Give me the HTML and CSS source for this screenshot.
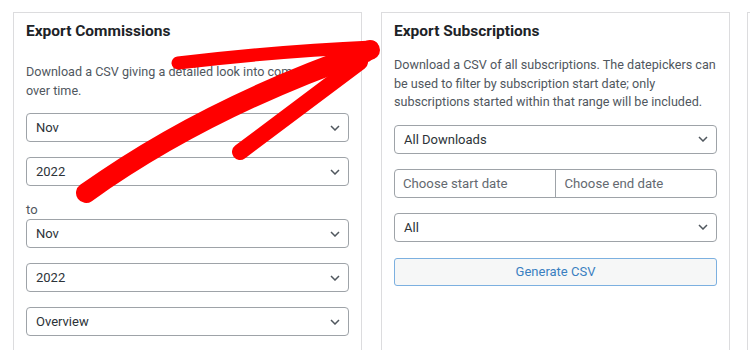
FILE: index.html
```html
<!DOCTYPE html>
<html lang="en">
<head>
    <meta charset="UTF-8">
    <meta name="viewport" content="width=device-width, initial-scale=1.0">
    <title>Export</title>
    <link rel="stylesheet" href="styles.css">
</head>
<body>
    <div class="panels">
        <div class="postbox">
            <h2>Export Commissions</h2>
            <p class="desc desc-wide">Download a CSV giving a detailed look into commissions over time.</p>
            <div class="field">
                <div class="select"><span>Nov</span><svg viewBox="0 0 10 6"><path d="M1 1l4 4 4-4"/></svg></div>
                <div class="select"><span>2022</span><svg viewBox="0 0 10 6"><path d="M1 1l4 4 4-4"/></svg></div>
                <div class="to">to</div>
                <div class="select"><span>Nov</span><svg viewBox="0 0 10 6"><path d="M1 1l4 4 4-4"/></svg></div>
                <div class="select"><span>2022</span><svg viewBox="0 0 10 6"><path d="M1 1l4 4 4-4"/></svg></div>
                <div class="select"><span>Overview</span><svg viewBox="0 0 10 6"><path d="M1 1l4 4 4-4"/></svg></div>
            </div>
        </div>

        <div class="postbox">
            <h2>Export Subscriptions</h2>
            <p class="desc">Download a CSV of all subscriptions. The datepickers can be used to filter by subscription start date; only subscriptions started within that range will be included.</p>
            <div class="field">
                <div class="select"><span>All Downloads</span><svg viewBox="0 0 10 6"><path d="M1 1l4 4 4-4"/></svg></div>
                <div class="dates">
                    <div class="date">Choose start date</div>
                    <div class="date">Choose end date</div>
                </div>
                <div class="select"><span>All</span><svg viewBox="0 0 10 6"><path d="M1 1l4 4 4-4"/></svg></div>
                <button class="btn">Generate CSV</button>
            </div>
        </div>

        <div class="postbox"></div>
    </div>

    <svg class="arrow" viewBox="0 0 750 350">
        <path d="M86 193 Q205 108 366 52"/>
        <path class="thin" d="M178 63 Q280 51 372 47"/>
        <path class="mid" d="M240 152 L360 62"/>
        <circle cx="370" cy="50" r="10"/>
    </svg>
</body>
</html>
```

FILE: styles.css
```css
* {
    margin: 0;
    padding: 0;
    box-sizing: border-box;
}

body {
    font-family: Roboto, "Liberation Sans", sans-serif;
    background: #fff;
    color: #1d2327;
    width: 750px;
    height: 350px;
    overflow: hidden;
    position: relative;
}

.panels {
    display: flex;
    gap: 19px;
    padding: 12px 0 0 13px;
    width: 750px;
    height: 350px;
    overflow: hidden;
}

.postbox {
    width: 349px;
    height: 338px;
    flex-shrink: 0;
    border: 1px solid #dcdcde;
    border-bottom: none;
    padding: 7px 12px 0;
}

.postbox:last-child {
    margin-left: -2px;
}

h2 {
    font-size: 15.5px;
    font-weight: 700;
    line-height: 20px;
    margin-top: 1px;
}

.desc {
    font-size: 12.6px;
    line-height: 18.5px;
    color: #50575e;
    margin-top: 15px;
}

.desc-wide {
    margin-top: 22px;
}

.field {
    display: flex;
    flex-direction: column;
    gap: 15px;
    margin-top: 13px;
}

.select {
    height: 29px;
    border: 1px solid #9ea3a8;
    border-radius: 4px;
    display: flex;
    align-items: center;
    justify-content: space-between;
    padding: 0 8px 0 9px;
    font-size: 13px;
    color: #2c3338;
    background: #fff;
}

.select svg {
    width: 10px;
    height: 6px;
    fill: none;
    stroke: #50575e;
    stroke-width: 1.5;
}

.to {
    font-size: 13px;
    color: #50575e;
    line-height: 18px;
    margin-bottom: -15px;
}

.dates {
    display: flex;
    height: 29px;
    border: 1px solid #9ea3a8;
    border-radius: 4px;
}

.date {
    flex: 1;
    display: flex;
    align-items: center;
    padding-left: 8px;
    font-size: 13.2px;
    color: #646970;
}

.date + .date {
    border-left: 1px solid #9ea3a8;
    padding-left: 9px;
}

.btn {
    height: 28px;
    margin-top: 1px;
    border: 1px solid #7cb0e0;
    border-radius: 3px;
    background: #f6f7f7;
    color: #3a7fc1;
    font-family: inherit;
    font-size: 13px;
}

.arrow {
    position: absolute;
    left: 0;
    top: 0;
    width: 750px;
    height: 350px;
    pointer-events: none;
}

.arrow path {
    fill: none;
    stroke: #ff0000;
    stroke-width: 20;
    stroke-linecap: round;
}

.arrow path.thin {
    stroke-width: 13;
}

.arrow path.mid {
    stroke-width: 16;
}

.arrow circle {
    fill: #ff0000;
}
```
